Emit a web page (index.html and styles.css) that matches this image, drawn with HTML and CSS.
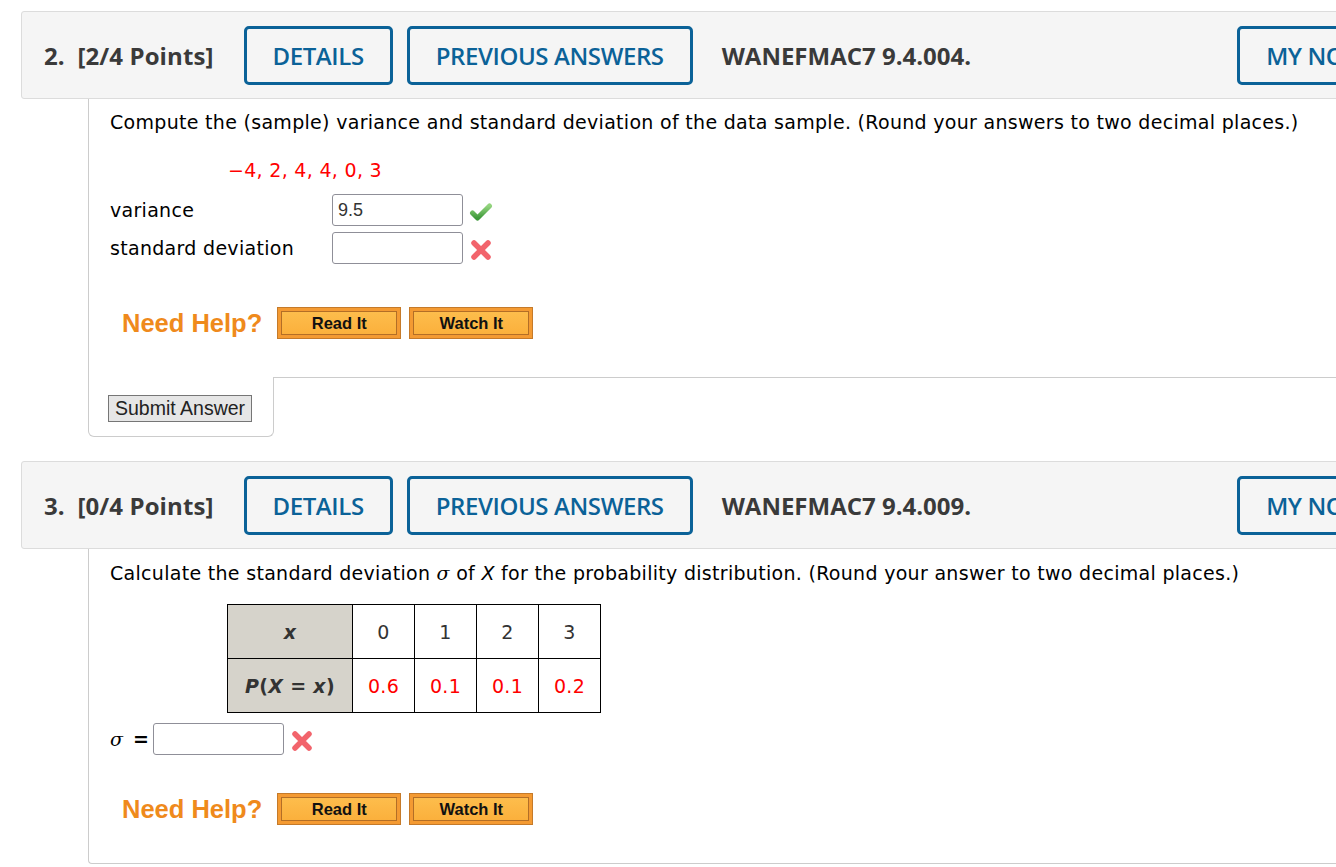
FILE: index.html
```html
<!DOCTYPE html>
<html>
<head>
<meta charset="utf-8">
<link rel="stylesheet" href="styles.css">
</head>
<body>
<div class="page">

  <section class="question">
    <div class="qhead">
      <div class="qlabel">2.&nbsp; [2/4 Points]</div>
      <div class="hbtn">DETAILS</div>
      <div class="hbtn">PREVIOUS ANSWERS</div>
      <div class="qcode">WANEFMAC7 9.4.004.</div>
      <div class="hbtn notes">MY NOTES</div>
    </div>
    <div class="qbody">
      <p class="prompt">Compute the (sample) variance and standard deviation of the data sample. (Round your answers to two decimal places.)</p>
      <p class="data">&minus;4, 2, 4, 4, 0, 3</p>
      <div class="answers">
        <span class="alabel">variance</span>
        <span class="field">9.5</span>
        <svg class="mark" width="24" height="22" viewBox="0 0 24 22"><defs><linearGradient id="g1" x1="0" y1="0" x2="0" y2="1"><stop offset="0" stop-color="#93d47e"/><stop offset="1" stop-color="#3e993a"/></linearGradient></defs><path d="M3.5 12 L8.5 17 L20.5 5" fill="none" stroke="url(#g1)" stroke-width="5" stroke-linecap="round" stroke-linejoin="round"/></svg>
        <span class="alabel">standard deviation</span>
        <span class="field"></span>
        <svg class="mark" width="24" height="22" viewBox="0 0 24 22"><path d="M5 4 L19 18 M19 4 L5 18" stroke="#f2646c" stroke-width="5.5" stroke-linecap="round"/></svg>
      </div>
      <div class="help">
        <span class="needhelp">Need Help?</span>
        <span class="obtn"><span>Read It</span></span>
        <span class="obtn"><span>Watch It</span></span>
      </div>
    </div>
    <div class="qfoot">
      <div class="submittab"><span class="submit">Submit Answer</span></div>
      <div class="footrest"></div>
    </div>
  </section>

  <section class="question second">
    <div class="qhead">
      <div class="qlabel">3.&nbsp; [0/4 Points]</div>
      <div class="hbtn">DETAILS</div>
      <div class="hbtn">PREVIOUS ANSWERS</div>
      <div class="qcode">WANEFMAC7 9.4.009.</div>
      <div class="hbtn notes">MY NOTES</div>
    </div>
    <div class="qbody last">
      <p class="prompt">Calculate the standard deviation <i class="sym">σ</i> of <i class="var">X</i> for the probability distribution. (Round your answer to two decimal places.)</p>
      <table class="dist">
        <tr><th><i>x</i></th><td>0</td><td>1</td><td>2</td><td>3</td></tr>
        <tr><th><i>P</i>(<i>X</i> = <i>x</i>)</th><td class="red">0.6</td><td class="red">0.1</td><td class="red">0.1</td><td class="red">0.2</td></tr>
      </table>
      <div class="sigma">
        <span class="sigmalabel"><i class="sym">σ</i><b class="eq">=</b></span>
        <span class="field"></span>
        <svg class="mark" width="24" height="22" viewBox="0 0 24 22"><path d="M5 4 L19 18 M19 4 L5 18" stroke="#f2646c" stroke-width="5.5" stroke-linecap="round"/></svg>
      </div>
      <div class="help help2">
        <span class="needhelp">Need Help?</span>
        <span class="obtn"><span>Read It</span></span>
        <span class="obtn"><span>Watch It</span></span>
      </div>
    </div>
  </section>

</div>
</body>
</html>
```
FILE: styles.css
```css
html, body {
  margin: 0;
  padding: 0;
  background: #fff;
  overflow: hidden;
}
.page {
  padding: 11px 0 0 21px;
  width: 1500px;
}
.question.second {
  margin-top: 24px;
}
.qhead {
  display: flex;
  align-items: center;
  height: 86px;
  background: #f5f5f5;
  border: 1px solid #dcdcdc;
  border-radius: 3px 0 0 3px;
  padding-left: 22px;
  font-family: "Open Sans", "Liberation Sans", sans-serif;
  font-size: 24px;
}
.qlabel {
  font-weight: 700;
  color: #3a3a3a;
  margin-right: 30px;
  letter-spacing: 0.1px;
}
.hbtn {
  height: 53px;
  display: flex;
  align-items: center;
  padding: 0 26px;
  border: 3px solid #0b6298;
  border-radius: 5px;
  color: #0b6298;
  font-weight: 600;
  margin-right: 14px;
  letter-spacing: -0.4px;
}
.qcode {
  font-weight: 700;
  color: #3a3a3a;
  margin-left: 15px;
}
.hbtn.notes {
  margin-left: 266px;
}
.qbody {
  margin-left: 67px;
  border-left: 1px solid #cccccc;
  padding: 11px 0 0 21px;
  font-family: "DejaVu Sans", Verdana, sans-serif;
  font-size: 19px;
  letter-spacing: 0.3px;
  color: #000;
}
.prompt {
  margin: 0;
  line-height: 24px;
}
.data {
  margin: 24px 0 0 118px;
  line-height: 24px;
  color: #ff0000;
}
.answers {
  display: grid;
  grid-template-columns: 222px 131px 32px;
  grid-auto-rows: 32px;
  row-gap: 6px;
  align-items: center;
  margin-top: 12px;
}
.alabel {
  line-height: 24px;
}
.field {
  box-sizing: border-box;
  display: flex;
  align-items: center;
  width: 131px;
  height: 32px;
  border: 1px solid #8f8f98;
  border-radius: 3px;
  padding-left: 5px;
  font-family: "Liberation Sans", Arial, sans-serif;
  font-size: 18px;
  letter-spacing: 0;
  color: #333;
  background: #fff;
}
.mark {
  margin-left: 6px;
  margin-top: 4px;
}
.help {
  display: flex;
  align-items: center;
  margin: 42px 0 0 12px;
  height: 34px;
  letter-spacing: 0;
}
.needhelp {
  font-family: "Liberation Sans", Arial, sans-serif;
  font-weight: 700;
  font-size: 25.5px;
  color: #ef8a1c;
  margin-right: 15px;
}
.obtn {
  box-sizing: border-box;
  width: 124px;
  height: 32px;
  padding: 3px;
  margin-right: 8px;
  background: #f49a32;
  border: 1px solid #c57a2a;
  display: flex;
}
.obtn span {
  flex: 1;
  display: flex;
  align-items: center;
  justify-content: center;
  background: linear-gradient(#fdbd4c, #fbb03c);
  border: 1px solid #b36e26;
  font-family: "Liberation Sans", Arial, sans-serif;
  font-weight: 700;
  font-size: 16.5px;
  color: #111;
}
.qbody {
  padding-bottom: 37px;
}
.qfoot {
  display: flex;
  margin-left: 67px;
}
.submittab {
  width: 186px;
  border-left: 1px solid #cccccc;
  border-right: 1px solid #cccccc;
  border-bottom: 1px solid #cccccc;
  border-radius: 0 0 6px 6px;
  padding: 18px 0 14px 19px;
  box-sizing: border-box;
}
.submit {
  display: inline-block;
  box-sizing: border-box;
  height: 27px;
  line-height: 25px;
  padding: 0 6px;
  border: 1px solid #767676;
  background: #e6e6e6;
  font-family: "Liberation Sans", Arial, sans-serif;
  font-size: 19.5px;
  color: #222;
  white-space: nowrap;
}
.footrest {
  flex: 1;
  border-top: 1px solid #cccccc;
}
.qbody.last {
  border-bottom: 1px solid #cccccc;
  border-radius: 0 0 0 4px;
  padding-top: 12px;
  padding-bottom: 37px;
}
.sym {
  font-family: "DejaVu Serif", "Liberation Serif", serif;
  font-style: italic;
}
.var {
  font-style: italic;
}
.dist {
  border-collapse: collapse;
  margin: 19px 0 10px 117px;
  font-family: "DejaVu Sans", Verdana, sans-serif;
  font-size: 19px;
}
.dist th, .dist td {
  border: 1px solid #000;
  height: 53px;
  padding: 0;
  text-align: center;
  color: #333;
}
.dist th {
  width: 124px;
  background: #d6d3cb;
  font-weight: 700;
}
.dist td {
  width: 61px;
}
.dist td.red {
  color: #ff0000;
}
.sigma {
  display: flex;
  align-items: center;
  height: 32px;
}
.sigmalabel {
  width: 43px;
  letter-spacing: 0;
}
.eq {
  font-weight: 700;
  margin-left: 10px;
}
.help2 {
  margin-top: 37px;
}
```
